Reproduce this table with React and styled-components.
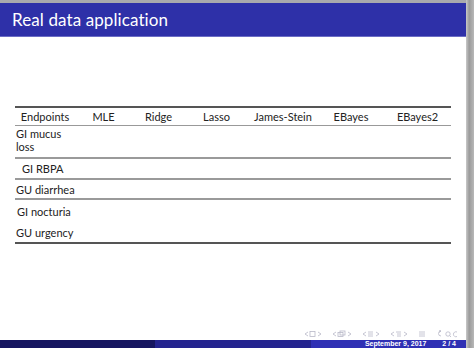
import React from 'react';
import styled, { createGlobalStyle } from 'styled-components';

const GlobalStyle = createGlobalStyle`
  html, body {
    margin: 0;
    padding: 0;
    background: #ffffff;
  }
  body {
    font-family: Lato, "DejaVu Sans", sans-serif;
  }
`;

const Screen = styled.div`
  display: flex;
  width: 474px;
  height: 348px;
  overflow: hidden;
`;

const Slide = styled.div`
  flex: 1;
  display: flex;
  flex-direction: column;
  background: #ffffff;
`;

const EdgeShade = styled.div`
  width: 8px;
  background: linear-gradient(to right, #c9c9c9, #9a9a9a 40%, #b8b8b8);
`;

const TopStrip = styled.div`
  height: 3px;
  background: #a9a9ad;
`;

const TitleBar = styled.div`
  height: 33px;
  display: flex;
  align-items: center;
  padding-left: 12px;
  background: #2e30a8;
  border-bottom: 1px solid #6b6dc4;
  color: #ffffff;
  font-size: 17px;
  letter-spacing: 0.1px;
`;

const Content = styled.div`
  flex: 1;
  padding: 69px 15px 0 15px;
`;

const Table = styled.table`
  width: 436px;
  table-layout: fixed;
  border-collapse: collapse;
  font-size: 11px;
  color: #222222;
  border-top: 2px solid #555555;
  border-bottom: 2px solid #555555;
`;

const HeadCell = styled.th`
  font-weight: normal;
  text-align: center;
  padding: 0;
  height: 17px;
  line-height: 13px;
  border-bottom: 1.5px solid #999999;
`;

const Row = styled.tr`
  border-bottom: ${p => (p.$rule ? '2px solid #9a9a9a' : 'none')};
`;

const Cell = styled.td`
  text-align: left;
  vertical-align: ${p => (p.$top ? 'top' : 'middle')};
  padding: ${p => (p.$top ? '1px' : '0')} 0 0 ${p => p.$indent || 1}px;
  line-height: 13px;
  height: ${p => p.$h}px;
`;

const NavRow = styled.div`
  height: 13px;
  display: flex;
  justify-content: flex-end;
  align-items: center;
  padding-right: 8px;
  gap: 10px;
`;

const Footer = styled.div`
  height: 8px;
  display: flex;
`;

const FooterPart = styled.div`
  flex: 1;
  background: ${p => p.$bg};
  display: flex;
  justify-content: flex-end;
  align-items: center;
  padding-right: 10px;
  gap: 16px;
  color: #ffffff;
  font-family: "Liberation Sans Narrow", "Liberation Sans", sans-serif;
  font-size: 7px;
  font-weight: bold;
  line-height: 8px;
  overflow: hidden;
`;

const NavIcon = ({ w, children }) => (
  <svg width={w} height="8" viewBox={`0 0 ${w} 8`} fill="none" stroke="#b8b8c8" strokeWidth="0.8">
    {children}
  </svg>
);

const rows = [
  { lines: ['GI mucus', 'loss'], h: 30, indent: 1, rule: true, top: true },
  { lines: ['GI RBPA'], h: 19, indent: 7, rule: true },
  { lines: ['GU diarrhea'], h: 18, indent: 1, rule: true },
  { lines: ['GI nocturia'], h: 23, indent: 2, rule: false },
  { lines: ['GU urgency'], h: 19, indent: 1, rule: false },
];

const headers = ['Endpoints', 'MLE', 'Ridge', 'Lasso', 'James-Stein', 'EBayes', 'EBayes2'];
const widths = [60, 57, 53, 63, 70, 66, 67];

export default function App() {
  return (
    <>
      <GlobalStyle />
      <Screen>
        <Slide>
          <TopStrip />
          <TitleBar>Real data application</TitleBar>
          <Content>
            <Table>
              <colgroup>
                {widths.map((w, i) => <col key={i} style={{ width: w }} />)}
              </colgroup>
              <thead>
                <tr>
                  {headers.map(h => <HeadCell key={h}>{h}</HeadCell>)}
                </tr>
              </thead>
              <tbody>
                {rows.map((r, i) => (
                  <Row key={i} $rule={r.rule}>
                    <Cell $h={r.h} $indent={r.indent} $top={r.top}>
                      {r.lines.map((l, j) => <div key={j}>{l}</div>)}
                    </Cell>
                    <Cell /><Cell /><Cell /><Cell /><Cell /><Cell />
                  </Row>
                ))}
              </tbody>
            </Table>
          </Content>
          <NavRow>
            <NavIcon w={18}>
              <path d="M4 2 L1 4 L4 6" />
              <rect x="6" y="1.5" width="5" height="5" />
              <path d="M14 2 L17 4 L14 6" />
            </NavIcon>
            <NavIcon w={20}>
              <path d="M4 2 L1 4 L4 6" />
              <rect x="6" y="2.5" width="5" height="4" />
              <rect x="8" y="1" width="5" height="4" />
              <path d="M16 2 L19 4 L16 6" />
            </NavIcon>
            <NavIcon w={18}>
              <path d="M4 2 L1 4 L4 6" />
              <path d="M6 2 H11 M6 4 H11 M6 6 H11" />
              <path d="M14 2 L17 4 L14 6" />
            </NavIcon>
            <NavIcon w={18}>
              <path d="M4 2 L1 4 L4 6" />
              <path d="M6 2 H11 M7 4 H11 M7 6 H11" />
              <path d="M14 2 L17 4 L14 6" />
            </NavIcon>
            <NavIcon w={8}>
              <path d="M1 2 H7 M1 4 H7 M1 6 H7" />
            </NavIcon>
            <NavIcon w={22}>
              <path d="M5 6 A2.5 2.5 0 1 1 5 1 M3 0 L5 1 L3 2.5" />
              <circle cx="12" cy="4" r="2.2" />
              <path d="M13.6 5.6 L15 7" />
              <path d="M21 2 A2.5 2.5 0 1 0 21 6.5" />
            </NavIcon>
          </NavRow>
          <Footer>
            <FooterPart $bg="#161660" />
            <FooterPart $bg="#24248f" />
            <FooterPart $bg="#2f30b4">
              <span>September 9, 2017</span>
              <span>2 / 4</span>
            </FooterPart>
          </Footer>
        </Slide>
        <EdgeShade />
      </Screen>
    </>
  );
}
